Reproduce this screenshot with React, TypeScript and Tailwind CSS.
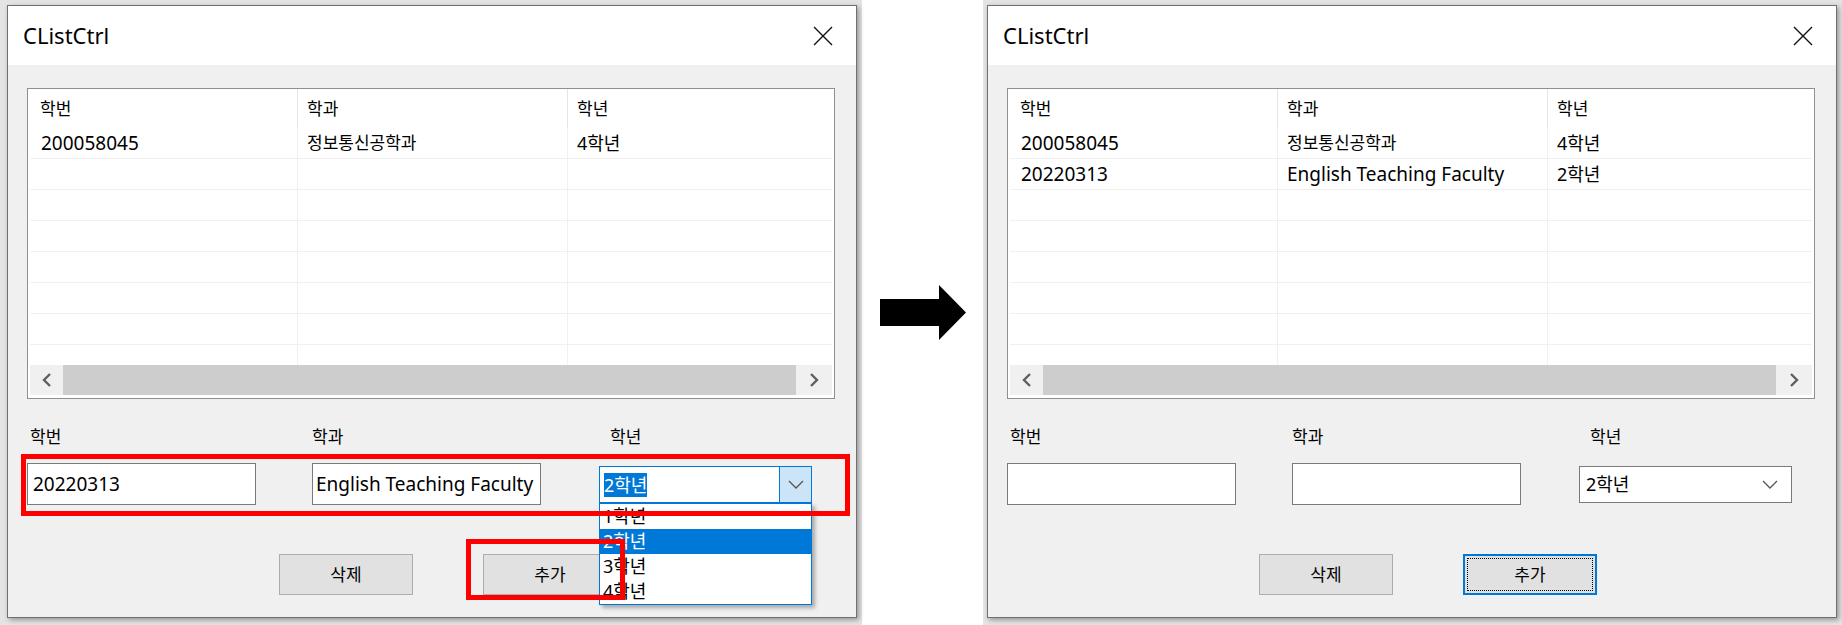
import React from 'react'

type Row = [string, string, string]

const font = "font-['Noto_Sans','Noto_Sans_CJK_KR',sans-serif]"

function textSize(s: string) {
  const hangul = /[\uac00-\ud7a3]/.test(s)
  const latin = /[0-9A-Za-z]/.test(s)
  if (hangul && !latin) return 'text-[17px]'
  if (hangul) return 'text-[18px]'
  return 'text-[19px]'
}

function CloseIcon() {
  return (
    <svg width="20" height="20" viewBox="0 0 20 20" className="shrink-0">
      <path d="M1 1 L19 19 M19 1 L1 19" stroke="#111" strokeWidth="1.4" fill="none" />
    </svg>
  )
}

function Chevron({ dir }: { dir: 'left' | 'right' }) {
  return (
    <svg width="10" height="16" viewBox="0 0 10 16">
      <path d={dir === 'left' ? 'M8 2 L2 8 L8 14' : 'M2 2 L8 8 L2 14'} stroke="#5f5f5f" strokeWidth="2.4" fill="none" />
    </svg>
  )
}

function DownChevron() {
  return (
    <svg width="16" height="9" viewBox="0 0 16 9">
      <path d="M1 1 L8 8 L15 1" stroke="#555" strokeWidth="1.3" fill="none" />
    </svg>
  )
}

function ListView({ rows }: { rows: Row[] }) {
  return (
    <div className="flex h-[311px] w-[808px] flex-col border border-[#8f8f8f] bg-white">
      <div className="flex h-[39px] shrink-0 text-[17px] text-black">
        <div className="flex h-full w-[270px] items-center border-r border-[#e5e5e5] pl-[12px]">학번</div>
        <div className="flex h-full w-[270px] items-center border-r border-[#e5e5e5] pl-[9px]">학과</div>
        <div className="flex h-full flex-1 items-center pl-[9px]">학년</div>
      </div>
      <div className="h-[237px] overflow-hidden px-[2px]">
        {Array.from({ length: 8 }).map((_, i) => {
          const r = rows[i]
          return (
            <div key={i} className="flex h-[31px] border-b border-[#f0f0f0] text-black">
              <div className={`flex h-full w-[268px] items-center border-r border-[#f0f0f0] pl-[11px] ${textSize(r?.[0] ?? '')}`}>{r?.[0]}</div>
              <div className={`flex h-full w-[270px] items-center border-r border-[#f0f0f0] pl-[9px] ${textSize(r?.[1] ?? '')}`}>{r?.[1]}</div>
              <div className={`flex h-full flex-1 items-center pl-[9px] ${textSize(r?.[2] ?? '')}`}>{r?.[2]}</div>
            </div>
          )
        })}
      </div>
      <div className="mx-[2px] mb-[3px] flex h-[30px] shrink-0">
        <div className="flex w-[33px] items-center justify-center bg-[#f0f0f0]">
          <Chevron dir="left" />
        </div>
        <div className="flex-1 bg-[#cdcdcd]" />
        <div className="flex w-[36px] items-center justify-center bg-[#f0f0f0]">
          <Chevron dir="right" />
        </div>
      </div>
    </div>
  )
}

function Button({ label, focused }: { label: string; focused?: boolean }) {
  if (focused) {
    return (
      <div className="flex h-[41px] w-[134px] items-center justify-center border-2 border-[#0078d7] bg-[#e1e1e1] p-[2px]">
        <div className="flex h-full w-full items-center justify-center border border-dotted border-black text-[17px] text-black">
          {label}
        </div>
      </div>
    )
  }
  return (
    <div className="flex h-[41px] w-[134px] items-center justify-center border border-[#adadad] bg-[#e1e1e1] text-[17px] text-black">
      {label}
    </div>
  )
}

interface DialogProps {
  rows: Row[]
  id: string
  dept: string
  annotated?: boolean
}

function Dialog({ rows, id, dept, annotated }: DialogProps) {
  return (
    <div className={`relative flex h-[613px] w-[850px] flex-col border border-[#707070] bg-white shadow-[2px_2px_5px_rgba(0,0,0,0.35)] ${font}`}>
      <div className="flex h-[59px] shrink-0 items-center justify-between bg-white pl-[15px] pr-[23px]">
        <span className="text-[22px] text-black">CListCtrl</span>
        <CloseIcon />
      </div>
      <div className="flex flex-1 flex-col bg-[#f0f0f0] px-[19px] pt-[23px]">
        <ListView rows={rows} />

        <div className="mt-[26px] flex">
          <div className="flex w-[229px] flex-col">
            <div className="h-[24px] pl-[3px] text-[17px] leading-[24px] text-black">학번</div>
            <div className="mt-[14px] flex h-[42px] items-center border border-[#7a7a7a] bg-white pl-[5px] text-[19px] text-black">
              {id}
            </div>
          </div>
          <div className="ml-[56px] flex w-[229px] flex-col">
            <div className="h-[24px] text-[17px] leading-[24px] text-black">학과</div>
            <div className="mt-[14px] flex h-[42px] items-center overflow-hidden whitespace-nowrap border border-[#7a7a7a] bg-white pl-[3px] text-[19px] text-black">
              {dept}
            </div>
          </div>
          <div className="ml-[58px] flex w-[213px] flex-col">
            <div className="h-[24px] pl-[11px] text-[17px] leading-[24px] text-black">학년</div>
            {annotated ? (
              <div className="mt-[17px] flex h-[37px] border border-[#0078d7] bg-white">
                <div className="flex flex-1 items-center pl-[4px]">
                  <span className="bg-[#0078d7] text-[18px] leading-[24px] text-white">2학년</span>
                </div>
                <div className="flex w-[32px] items-center justify-center border-l border-[#0078d7] bg-[#cce4f7]">
                  <DownChevron />
                </div>
              </div>
            ) : (
              <div className="mt-[17px] flex h-[37px] items-center justify-between border border-[#7a7a7a] bg-white pl-[6px] pr-[13px]">
                <span className="text-[18px] text-black">2학년</span>
                <DownChevron />
              </div>
            )}
          </div>
        </div>

        <div className="ml-[252px] mt-[49px] flex gap-[70px]">
          <Button label="삭제" />
          <Button label="추가" focused={!annotated} />
        </div>
      </div>

      {annotated && (
        <>
          <div className="absolute left-[591px] top-[497px] w-[213px] border border-[#0078d7] bg-white text-[18px] shadow-[3px_3px_4px_rgba(0,0,0,0.3)]">
            {['1학년', '2학년', '3학년', '4학년'].map((g, i) => (
              <div
                key={g}
                className={`flex h-[25px] items-center pl-[3px] ${i === 1 ? 'bg-[#0078d7] text-white' : 'text-black'}`}
              >
                {g}
              </div>
            ))}
          </div>
          <div className="absolute left-[13px] top-[448px] h-[62px] w-[829px] border-[5px] border-[#ff0000]" />
          <div className="absolute left-[458px] top-[533px] h-[61px] w-[159px] border-[5px] border-[#ff0000]" />
        </>
      )}
    </div>
  )
}

export default function App() {
  const first: Row[] = [['200058045', '정보통신공학과', '4학년']]
  const second: Row[] = [
    ['200058045', '정보통신공학과', '4학년'],
    ['20220313', 'English Teaching Faculty', '2학년'],
  ]

  return (
    <div className="flex h-[625px] w-[1842px] bg-white">
      <div className="h-full w-[862px] shrink-0 bg-[#e4e4e4] pl-[7px] pt-[5px]">
        <Dialog rows={first} id="20220313" dept="English Teaching Faculty" annotated />
      </div>
      <div className="flex h-full w-[121px] shrink-0 items-center justify-center">
        <svg width="86" height="55" viewBox="0 0 86 55">
          <polygon points="0,14 59,14 59,0 86,27.5 59,55 59,41 0,41" fill="#000" />
        </svg>
      </div>
      <div className="h-full w-[859px] shrink-0 bg-[#e4e4e4] pl-[4px] pt-[5px]">
        <Dialog rows={second} id="" dept="" />
      </div>
    </div>
  )
}
